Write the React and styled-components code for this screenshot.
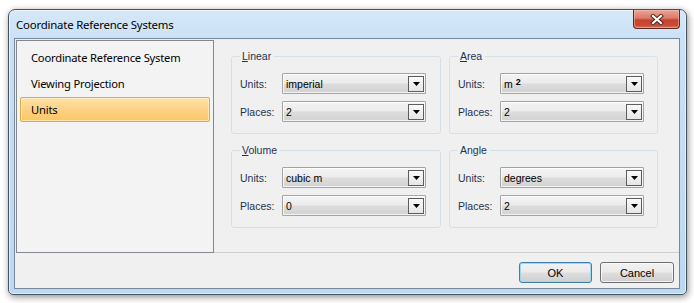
import React from 'react';
import styled, { createGlobalStyle } from 'styled-components';

const GlobalStyle = createGlobalStyle`
  body {
    margin: 0;
    background: #ffffff;
    font-family: "Liberation Sans", Arial, sans-serif;
  }
`;

const Page = styled.div`
  padding: 9px 7px 8px 8px;
  width: 694px;
  height: 303px;
  box-sizing: border-box;
`;

const Window = styled.div`
  width: 679px;
  height: 286px;
  box-sizing: border-box;
  border: 1px solid #46525e;
  border-radius: 7px 7px 5px 5px;
  background: linear-gradient(180deg, #d6e8f8 0%, #c9e0f6 12%, #bcd8f2 100%);
  box-shadow: 1px 2px 7px rgba(0, 0, 0, 0.45), inset 0 0 0 1px rgba(255, 255, 255, 0.55);
  padding: 0 6px 5px 5px;
  display: flex;
  flex-direction: column;
`;

const TitleBar = styled.div`
  height: 28px;
  display: flex;
  align-items: center;
  justify-content: space-between;
  flex-shrink: 0;
`;

const Title = styled.span`
  padding-left: 2px;
  font-family: "Noto Sans", "Open Sans", sans-serif;
  font-size: 11.4px;
  color: #000;
  letter-spacing: -0.2px;
`;

const CloseButton = styled.div`
  align-self: flex-start;
  width: 47px;
  height: 19px;
  box-sizing: border-box;
  border: 1px solid #5b2a24;
  border-top: none;
  border-radius: 0 0 4px 4px;
  background: linear-gradient(180deg, #e9a697 0%, #dc7a68 45%, #c8442f 55%, #c74a36 85%, #d87a62 100%);
  display: flex;
  align-items: center;
  justify-content: center;
  box-shadow: inset 0 0 0 1px rgba(255, 200, 190, 0.45);
`;

const Client = styled.div`
  flex: 1;
  border: 1px solid #78889a;
  background: #f0f0f0;
  display: flex;
  flex-direction: column;
`;

const Body = styled.div`
  height: 214px;
  box-sizing: border-box;
  padding: 1px 0 0 1px;
  display: flex;
`;

const NavList = styled.div`
  width: 198px;
  box-sizing: border-box;
  border: 1px solid #828790;
  background: #f3f3f3;
  padding: 3px 3px 0 3px;
  display: flex;
  flex-direction: column;
`;

const NavItem = styled.div`
  box-sizing: border-box;
  display: flex;
  align-items: center;
  padding-left: 10px;
  font-family: "Noto Sans", "Open Sans", sans-serif;
  font-size: 11.2px;
  letter-spacing: -0.2px;
  color: #000;
  border: 1px solid ${p => (p.$active ? '#e2a844' : 'transparent')};
  border-radius: 2px;
  background: ${p => (p.$active ? 'linear-gradient(180deg, #fee3a8 0%, #fcd185 50%, #fbc765 100%)' : 'transparent')};
  box-shadow: ${p => (p.$active ? 'inset 0 0 0 1px rgba(255,245,215,0.6)' : 'none')};
  margin-top: ${p => (p.$active ? '1px' : '0')};
  height: ${p => (p.$active ? '25px' : '26px')};
`;

const Settings = styled.div`
  flex: 1;
  border-bottom: 1px solid #cfcfcf;
  padding: 9px 0 0 17px;
  display: grid;
  grid-template-columns: 210px 209px;
  grid-template-rows: 85px 85px;
  column-gap: 8px;
  row-gap: 9px;
  align-content: start;
`;

const Group = styled.fieldset`
  margin: 0;
  min-width: 0;
  border: 1px solid #d6e0e6;
  border-radius: 3px;
  padding: 10px 13px 11px 8px;
  display: grid;
  grid-template-columns: 42px 144px;
  grid-template-rows: 21px 21px;
  row-gap: 7px;
  align-items: center;
`;

const Legend = styled.legend`
  padding: 0 3px 0 2px;
  font-size: 10.5px;
  line-height: 14px;
  color: #1e3350;
`;

const Key = styled.span`
  text-decoration: underline;
`;

const Label = styled.span`
  font-size: 10.5px;
  color: #1e3350;
`;

const Select = styled.div`
  height: 21px;
  box-sizing: border-box;
  border: 1px solid #a4a4a4;
  border-radius: 1px;
  background: linear-gradient(180deg, #f4f4f4 0%, #ececec 45%, #dcdcdc 55%, #d2d2d2 100%);
  box-shadow: inset 0 0 0 1px rgba(255, 255, 255, 0.7);
  display: flex;
  align-items: center;
  justify-content: space-between;
  padding: 0 1px 0 3px;
  font-size: 10.5px;
  color: #000;
`;

const Arrow = styled.div`
  width: 16px;
  height: 16px;
  box-sizing: border-box;
  border: 1px solid #5d5d5d;
  background: linear-gradient(180deg, #fafafa 0%, #e6e6e6 100%);
  display: flex;
  align-items: center;
  justify-content: center;
`;

const Sup = styled.span`
  font-size: 9px;
  font-weight: bold;
  position: relative;
  top: -3px;
  margin-left: 3px;
`;

const Footer = styled.div`
  flex: 1;
  display: flex;
  justify-content: flex-end;
  align-items: flex-start;
  gap: 8px;
  padding: 9px 5px 0 0;
`;

const Button = styled.button`
  width: ${p => p.$w}px;
  height: 21px;
  box-sizing: border-box;
  border: 1px solid ${p => (p.$focus ? '#3c7fb1' : '#707070')};
  border-radius: 3px;
  background: linear-gradient(180deg, #f2f2f2 0%, #ebebeb 45%, #dddddd 55%, #cfcfcf 100%);
  box-shadow: inset 0 0 0 1px ${p => (p.$focus ? '#9fd6f2' : 'rgba(255,255,255,0.7)')};
  font-family: "Liberation Sans", Arial, sans-serif;
  font-size: 11px;
  color: #000;
  padding: 0;
`;

const CloseIcon = () => (
  <svg width="14" height="11" viewBox="0 0 14 11">
    <path d="M3 2 L11 9 M11 2 L3 9" stroke="#4a2420" strokeWidth="4" strokeLinecap="square" />
    <path d="M3 2 L11 9 M11 2 L3 9" stroke="#ffffff" strokeWidth="2.2" strokeLinecap="square" />
  </svg>
);

const DownArrow = () => (
  <svg width="7" height="4" viewBox="0 0 7 4">
    <path d="M0 0 H7 L3.5 4 Z" fill="#000" />
  </svg>
);

const Combo = ({ children }) => (
  <Select>
    <span>{children}</span>
    <Arrow>
      <DownArrow />
    </Arrow>
  </Select>
);

const groups = [
  { id: 'linear', title: <><Key>L</Key>inear</>, units: 'imperial', places: '2' },
  { id: 'area', title: <><Key>A</Key>rea</>, units: <>m<Sup>2</Sup></>, places: '2' },
  { id: 'volume', title: <><Key>V</Key>olume</>, units: 'cubic m', places: '0' },
  { id: 'angle', title: <>An<Key>g</Key>le</>, units: 'degrees', places: '2' },
];

export default function App() {
  return (
    <Page>
      <GlobalStyle />
      <Window>
        <TitleBar>
          <Title>Coordinate Reference Systems</Title>
          <CloseButton>
            <CloseIcon />
          </CloseButton>
        </TitleBar>
        <Client>
          <Body>
            <NavList>
              <NavItem>Coordinate Reference System</NavItem>
              <NavItem>Viewing Projection</NavItem>
              <NavItem $active>Units</NavItem>
            </NavList>
            <Settings>
              {groups.map(g => (
                <Group key={g.id}>
                  <Legend>{g.title}</Legend>
                  <Label>Units:</Label>
                  <Combo>{g.units}</Combo>
                  <Label>Places:</Label>
                  <Combo>{g.places}</Combo>
                </Group>
              ))}
            </Settings>
          </Body>
          <Footer>
            <Button $w={73} $focus>OK</Button>
            <Button $w={74}>Cancel</Button>
          </Footer>
        </Client>
      </Window>
    </Page>
  );
}
